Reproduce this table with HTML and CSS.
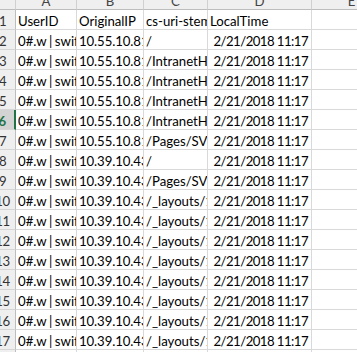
FILE: index.html
```html
<!DOCTYPE html>
<html>
<head>
<meta charset="utf-8">
<link rel="stylesheet" href="styles.css">
</head>
<body>
<div class="viewport">
  <div class="sheet">
    <div class="corner"></div>
    <div class="colhead">A</div>
    <div class="colhead">B</div>
    <div class="colhead">C</div>
    <div class="colhead">D</div>
    <div class="colhead">E</div>

    <div class="rowhead">1</div>
    <div class="cell">UserID</div>
    <div class="cell">OriginalIP</div>
    <div class="cell">cs-uri-stem</div>
    <div class="cell">LocalTime</div>
    <div class="cell"></div>

    <div class="rowhead">2</div>
    <div class="cell">0#.w<span class="pipe">|</span>swift\user</div>
    <div class="cell ip">10.55.10.81</div>
    <div class="cell">/</div>
    <div class="cell num">2/21/2018 11:17</div>
    <div class="cell"></div>

    <div class="rowhead">3</div>
    <div class="cell">0#.w<span class="pipe">|</span>swift\user</div>
    <div class="cell ip">10.55.10.81</div>
    <div class="cell">/IntranetHome/Pages</div>
    <div class="cell num">2/21/2018 11:17</div>
    <div class="cell"></div>

    <div class="rowhead">4</div>
    <div class="cell">0#.w<span class="pipe">|</span>swift\user</div>
    <div class="cell ip">10.55.10.81</div>
    <div class="cell">/IntranetHome/Pages</div>
    <div class="cell num">2/21/2018 11:17</div>
    <div class="cell"></div>

    <div class="rowhead">5</div>
    <div class="cell">0#.w<span class="pipe">|</span>swift\user</div>
    <div class="cell ip">10.55.10.81</div>
    <div class="cell">/IntranetHome/Pages</div>
    <div class="cell num">2/21/2018 11:17</div>
    <div class="cell"></div>

    <div class="rowhead active">6</div>
    <div class="cell">0#.w<span class="pipe">|</span>swift\user</div>
    <div class="cell ip">10.55.10.81</div>
    <div class="cell">/IntranetHome/Pages</div>
    <div class="cell num">2/21/2018 11:17</div>
    <div class="cell"></div>

    <div class="rowhead">7</div>
    <div class="cell">0#.w<span class="pipe">|</span>swift\user</div>
    <div class="cell ip">10.55.10.81</div>
    <div class="cell">/Pages/SVHome.aspx</div>
    <div class="cell num">2/21/2018 11:17</div>
    <div class="cell"></div>

    <div class="rowhead">8</div>
    <div class="cell">0#.w<span class="pipe">|</span>swift\user</div>
    <div class="cell ip">10.39.10.43</div>
    <div class="cell">/</div>
    <div class="cell num">2/21/2018 11:17</div>
    <div class="cell"></div>

    <div class="rowhead">9</div>
    <div class="cell">0#.w<span class="pipe">|</span>swift\user</div>
    <div class="cell ip">10.39.10.43</div>
    <div class="cell">/Pages/SVHome.aspx</div>
    <div class="cell num">2/21/2018 11:17</div>
    <div class="cell"></div>

    <div class="rowhead">10</div>
    <div class="cell">0#.w<span class="pipe">|</span>swift\user</div>
    <div class="cell ip">10.39.10.43</div>
    <div class="cell">/_layouts/15/init.js</div>
    <div class="cell num">2/21/2018 11:17</div>
    <div class="cell"></div>

    <div class="rowhead">11</div>
    <div class="cell">0#.w<span class="pipe">|</span>swift\user</div>
    <div class="cell ip">10.39.10.43</div>
    <div class="cell">/_layouts/15/init.js</div>
    <div class="cell num">2/21/2018 11:17</div>
    <div class="cell"></div>

    <div class="rowhead">12</div>
    <div class="cell">0#.w<span class="pipe">|</span>swift\user</div>
    <div class="cell ip">10.39.10.43</div>
    <div class="cell">/_layouts/15/init.js</div>
    <div class="cell num">2/21/2018 11:17</div>
    <div class="cell"></div>

    <div class="rowhead">13</div>
    <div class="cell">0#.w<span class="pipe">|</span>swift\user</div>
    <div class="cell ip">10.39.10.43</div>
    <div class="cell">/_layouts/15/init.js</div>
    <div class="cell num">2/21/2018 11:17</div>
    <div class="cell"></div>

    <div class="rowhead">14</div>
    <div class="cell">0#.w<span class="pipe">|</span>swift\user</div>
    <div class="cell ip">10.39.10.43</div>
    <div class="cell">/_layouts/15/init.js</div>
    <div class="cell num">2/21/2018 11:17</div>
    <div class="cell"></div>

    <div class="rowhead">15</div>
    <div class="cell">0#.w<span class="pipe">|</span>swift\user</div>
    <div class="cell ip">10.39.10.43</div>
    <div class="cell">/_layouts/15/init.js</div>
    <div class="cell num">2/21/2018 11:17</div>
    <div class="cell"></div>

    <div class="rowhead">16</div>
    <div class="cell">0#.w<span class="pipe">|</span>swift\user</div>
    <div class="cell ip">10.39.10.43</div>
    <div class="cell">/_layouts/15/init.js</div>
    <div class="cell num">2/21/2018 11:17</div>
    <div class="cell"></div>

    <div class="rowhead">17</div>
    <div class="cell">0#.w<span class="pipe">|</span>swift\user</div>
    <div class="cell ip">10.39.10.43</div>
    <div class="cell">/_layouts/15/init.js</div>
    <div class="cell num">2/21/2018 11:17</div>
    <div class="cell"></div>

    <div class="rowhead">18</div>
    <div class="cell">0#.w<span class="pipe">|</span>swift\user</div>
    <div class="cell ip">10.39.10.43</div>
    <div class="cell">/_layouts/15/init.js</div>
    <div class="cell num">2/21/2018 11:17</div>
    <div class="cell"></div>
  </div>
</div>
</body>
</html>
```

FILE: styles.css
```css
html, body {
  margin: 0;
  padding: 0;
  background: #ffffff;
}

.viewport {
  width: 357px;
  height: 352px;
  overflow: hidden;
}

.sheet {
  display: grid;
  grid-template-columns: 26px 61px 67px 64px 104px 80px;
  grid-auto-rows: 20px;
  margin-top: -10px;
  margin-left: -10px;
  width: 402px;
  font-family: Lato, "Liberation Sans", sans-serif;
  font-size: 13.2px;
  color: #000000;
}

.corner,
.colhead {
  background: #efefef;
  border-right: 1px solid #d0d0d0;
  border-bottom: 1px solid #bdbdbd;
  box-sizing: border-box;
}

.colhead {
  display: flex;
  align-items: flex-end;
  justify-content: center;
  color: #444444;
  line-height: 14px;
  padding-bottom: 1px;
}

.rowhead {
  background: #efefef;
  border-right: 1px solid #bdbdbd;
  border-bottom: 1px solid #d6d6d6;
  box-sizing: border-box;
  display: flex;
  align-items: flex-end;
  justify-content: center;
  color: #333333;
  line-height: 16px;
  letter-spacing: -0.4px;
}

.rowhead.active {
  background: #d3d3d3;
  color: #217346;
  font-weight: bold;
  border-right: 2px solid #217346;
}

.cell {
  border-right: 1px solid #d9d9d9;
  border-bottom: 1px solid #d9d9d9;
  box-sizing: border-box;
  display: block;
  padding: 3px 2px 0 2px;
  line-height: 16px;
  white-space: nowrap;
  overflow: hidden;
}

.pipe {
  margin: 0 2.5px 0 2.5px;
}

.cell.ip {
  letter-spacing: -0.1px;
}

.cell.num {
  text-align: right;
  letter-spacing: -0.55px;
  padding-right: 3px;
}
```
